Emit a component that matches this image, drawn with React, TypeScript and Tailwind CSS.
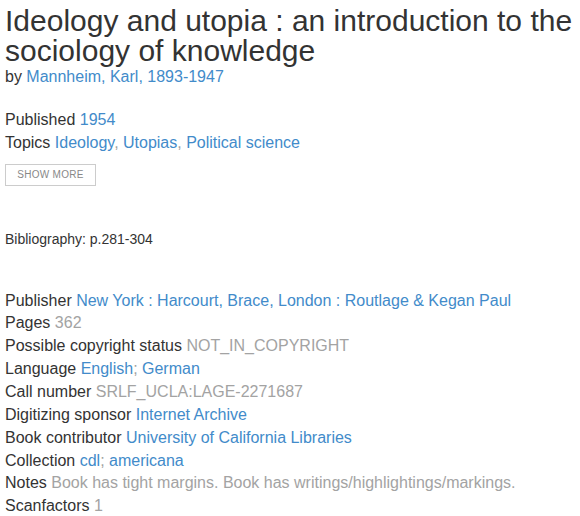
import React from 'react';

const link = 'text-[#428bca]';
const grey = 'text-[#a3a3a3]';

function Row({ label, parts, sep = ', ', muted }: { label: string; parts: string[]; sep?: string; muted?: boolean }) {
  return (
    <div className="leading-[22.86px]">
      {label}{' '}
      {parts.map((p, i) => (
        <React.Fragment key={p}>
          <span className={muted ? grey : link}>{p}</span>
          {i < parts.length - 1 && <span className={grey}>{sep}</span>}
        </React.Fragment>
      ))}
    </div>
  );
}

export default function App() {
  return (
    <div className="min-h-[516px] bg-white px-[5px] pt-[6px] text-[16px] text-[#333] font-['Liberation_Sans',Arial,sans-serif]">
      <h1 className="text-[30px] leading-[30px] font-normal">
        Ideology and utopia : an introduction to the sociology of knowledge
      </h1>
      <div className="leading-[22.86px]">
        by <span className={link}>Mannheim, Karl, 1893-1947</span>
      </div>

      <div className="mt-[20px]">
        <Row label="Published" parts={['1954']} />
        <Row label="Topics" parts={['Ideology', 'Utopias', 'Political science']} />
      </div>
      <button className="mt-[9px] h-[22px] w-[91px] border border-[#ccc] text-[10px] tracking-[0.3px] text-[#888] uppercase">
        Show more
      </button>

      <div className="mt-[43px] text-[14px] leading-[20px]">Bibliography: p.281-304</div>

      <div className="mt-[41px]">
        <Row label="Publisher" parts={['New York : Harcourt, Brace, London : Routlage & Kegan Paul']} />
        <Row label="Pages" parts={['362']} muted />
        <Row label="Possible copyright status" parts={['NOT_IN_COPYRIGHT']} muted />
        <Row label="Language" parts={['English', 'German']} sep="; " />
        <Row label="Call number" parts={['SRLF_UCLA:LAGE-2271687']} muted />
        <Row label="Digitizing sponsor" parts={['Internet Archive']} />
        <Row label="Book contributor" parts={['University of California Libraries']} />
        <Row label="Collection" parts={['cdl', 'americana']} sep="; " />
        <Row label="Notes" parts={['Book has tight margins. Book has writings/highlightings/markings.']} muted />
        <Row label="Scanfactors" parts={['1']} muted />
      </div>
    </div>
  );
}
